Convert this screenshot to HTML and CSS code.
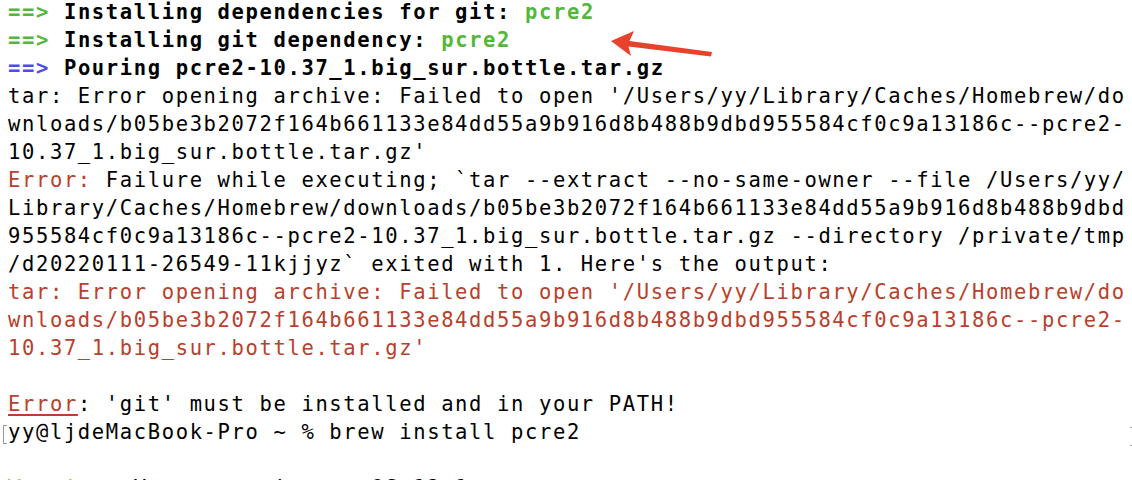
FILE: index.html
```html
<!DOCTYPE html>
<html lang="en">
<head>
  <meta charset="UTF-8">
  <title>Terminal - brew install pcre2</title>
  <link rel="stylesheet" href="styles.css">
</head>
<body>
  <div class="term">
    <div class="line"><b class="ok">==&gt;</b> <b>Installing dependencies for git:</b> <b class="ok">pcre2</b></div>
    <div class="line"><b class="ok">==&gt;</b> <b>Installing git dependency:</b> <b class="ok">pcre2</b></div>
    <div class="line"><b class="info">==&gt;</b> <b>Pouring pcre2-10.37_1.big_sur.bottle.tar.gz</b></div>
    <div class="line">tar: Error opening archive: Failed to open '/Users/yy/Library/Caches/Homebrew/do</div>
    <div class="line">wnloads/b05be3b2072f164b661133e84dd55a9b916d8b488b9dbd955584cf0c9a13186c--pcre2-</div>
    <div class="line">10.37_1.big_sur.bottle.tar.gz'</div>
    <div class="line"><span class="err">Error:</span> Failure while executing; `tar --extract --no-same-owner --file /Users/yy/</div>
    <div class="line">Library/Caches/Homebrew/downloads/b05be3b2072f164b661133e84dd55a9b916d8b488b9dbd</div>
    <div class="line">955584cf0c9a13186c--pcre2-10.37_1.big_sur.bottle.tar.gz --directory /private/tmp</div>
    <div class="line">/d20220111-26549-11kjjyz` exited with 1. Here's the output:</div>
    <div class="line err">tar: Error opening archive: Failed to open '/Users/yy/Library/Caches/Homebrew/do</div>
    <div class="line err">wnloads/b05be3b2072f164b661133e84dd55a9b916d8b488b9dbd955584cf0c9a13186c--pcre2-</div>
    <div class="line err">10.37_1.big_sur.bottle.tar.gz'</div>
    <div class="line"></div>
    <div class="line"><span class="err under">Error</span>: 'git' must be installed and in your PATH!</div>
    <div class="line prompt"><span class="mark mark-l"></span>yy@ljdeMacBook-Pro ~ % brew install pcre2<span class="mark mark-r"></span></div>
    <div class="line"></div>
    <div class="line"><span class="warn">Warning</span>: You are using macOS 12.1.</div>
  </div>

  <svg class="arrow" viewBox="0 0 120 40" width="120" height="40">
    <polygon points="11,16 34,6 29.5,16 112,27 111,31.5 28.5,21.5 31,31" fill="#e8412c"/>
  </svg>
</body>
</html>
```

FILE: styles.css
```css
* { margin:0; padding:0; box-sizing:border-box; }
body {
  background: #fff;
  color: #000;
  font-family: "DejaVu Sans Mono", "Liberation Mono", monospace;
  font-size: 20.5px;
  letter-spacing: 1.63px;
  line-height: 28px;
  overflow: hidden;
  height: 480px;
  position: relative;
}
.term {
  padding: 0 8px;
  margin-top: -2px;
}
.line {
  white-space: pre;
  height: 28px;
}
.ok { color: #55b73a; }
.info { color: #4d4de6; }
.err { color: #b8402d; }
.under {
  text-decoration: underline;
  text-decoration-thickness: 2px;
  text-underline-offset: 3px;
}
.warn { color: #b3b338; }
.prompt { position: relative; }
.mark {
  position: absolute;
  top: 7px;
  width: 4px;
  height: 19px;
  border: 1.5px solid #9a9a9a;
}
.mark-l { left: -5px; border-right: none; }
.mark-r { left: 1122px; top: 9px; border-left: none; }
.arrow {
  position: absolute;
  left: 600px;
  top: 25px;
}
```
